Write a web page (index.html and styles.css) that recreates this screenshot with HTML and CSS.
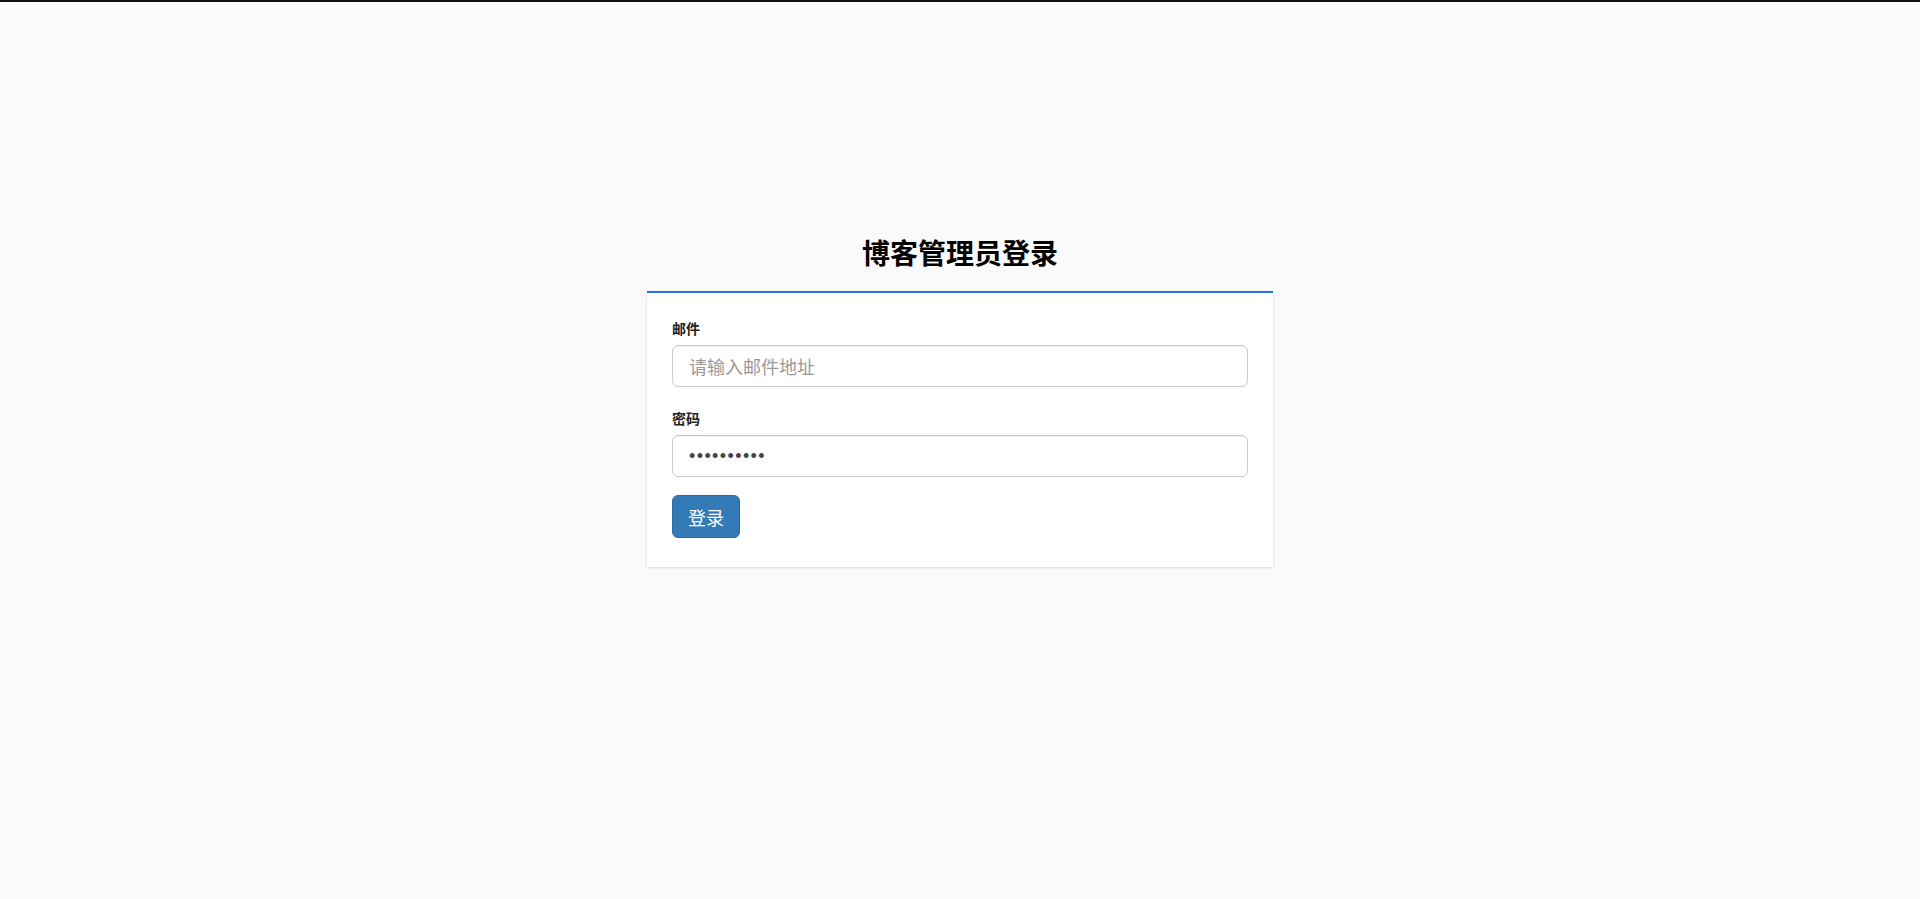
FILE: index.html
```html
<!DOCTYPE html>
<html lang="zh-CN">
<head>
<meta charset="utf-8">
<title>博客管理员登录</title>
<link rel="stylesheet" href="styles.css">
</head>
<body>
<div class="topbar"></div>
<main class="page">
  <h1 class="title">博客管理员登录</h1>
  <form class="card">
    <div class="group">
      <label class="label" for="email">邮件</label>
      <input class="field" id="email" type="email" placeholder="请输入邮件地址">
    </div>
    <div class="group group-last">
      <label class="label" for="pwd">密码</label>
      <input class="field field-pwd" id="pwd" type="password" value="1234567890">
    </div>
    <button class="btn" type="button">登录</button>
  </form>
</main>
</body>
</html>
```

FILE: styles.css
```css
* { box-sizing: border-box; }
html, body { margin: 0; padding: 0; }
body {
  background: #fafafa;
  font-family: "Liberation Sans", "Noto Sans CJK SC", sans-serif;
  color: #333;
  min-height: 899px;
}
.topbar {
  height: 2px;
  background: #111;
}
.page {
  display: flex;
  flex-direction: column;
  align-items: center;
  padding-top: 233px;
}
.title {
  margin: 0 0 22px;
  font-family: "Noto Sans CJK SC", sans-serif;
  font-size: 28px;
  line-height: 34px;
  font-weight: 700;
  color: #000;
}
.card {
  width: 626px;
  background: #fff;
  border-top: 2px solid #2a6cf5;
  box-shadow: 0 1px 3px rgba(0, 0, 0, 0.12);
  padding: 25px 25px 29px;
}
.group {
  margin-bottom: 21px;
}
.group-last {
  margin-bottom: 18px;
}
.label {
  display: block;
  font-family: "Noto Sans CJK SC", sans-serif;
  font-size: 14px;
  line-height: 20px;
  font-weight: 700;
  color: #222;
  margin-bottom: 7px;
}
.field {
  display: block;
  width: 100%;
  height: 42px;
  padding: 0 16px;
  font-family: "Noto Sans CJK SC", sans-serif;
  font-size: 18px;
  color: #555;
  background: #fff;
  border: 1px solid #ccc;
  border-radius: 6px;
  box-shadow: inset 0 1px 1px rgba(0, 0, 0, 0.075);
  outline: none;
}
.field-pwd {
  font-family: "Liberation Sans", sans-serif;
  letter-spacing: 1.4px;
  color: #444;
}
.field::placeholder {
  color: #999;
}
.btn {
  display: block;
  height: 43px;
  padding: 0 15px;
  font-family: "Noto Sans CJK SC", sans-serif;
  font-size: 18px;
  color: #fff;
  background: #337ab7;
  border: 1px solid #2e6da4;
  border-radius: 6px;
  cursor: pointer;
}
```
